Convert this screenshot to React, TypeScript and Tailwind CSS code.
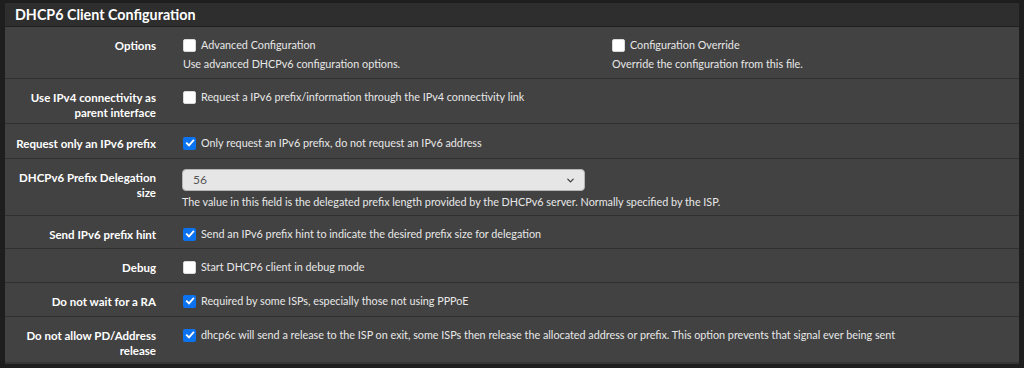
import { ChevronDown } from 'lucide-react';

type Row = {
  label: string;
  text?: string;
  checked?: boolean;
  h: string;
};

function Box({ checked }: { checked?: boolean }) {
  return checked ? (
    <span className="flex-none w-[13px] h-[13px] rounded-[2px] bg-[#0b73ef] flex items-center justify-center">
      <svg width="10" height="10" viewBox="0 0 10 10" fill="none">
        <path d="M1.8 5.2 L4 7.4 L8.3 2.6" stroke="white" strokeWidth="1.8" strokeLinecap="square" />
      </svg>
    </span>
  ) : (
    <span className="flex-none w-[13px] h-[13px] rounded-[2px] bg-white border border-[#d9d9d9]" />
  );
}

function Check({ checked, text }: { checked?: boolean; text: string }) {
  return (
    <div className="flex items-center gap-[5px] h-[16px]">
      <Box checked={checked} />
      <span className="text-[#e8e8e8]">{text}</span>
    </div>
  );
}

function Label({ children }: { children: string }) {
  return (
    <div className="w-[151px] flex-none pl-[9px] text-right font-bold text-white text-[11.5px] leading-[15px] pt-[1px]">
      {children}
    </div>
  );
}

const lower: Row[] = [
  { label: 'Send IPv6 prefix hint', text: 'Send an IPv6 prefix hint to indicate the desired prefix size for delegation', checked: true, h: 'h-[33px]' },
  { label: 'Debug', text: 'Start DHCP6 client in debug mode', h: 'h-[34px]' },
  { label: 'Do not wait for a RA', text: 'Required by some ISPs, especially those not using PPPoE', checked: true, h: 'h-[34px]' },
  { label: 'Do not allow PD/Address release', text: 'dhcp6c will send a release to the ISP on exit, some ISPs then release the allocated address or prefix. This option prevents that signal ever being sent', checked: true, h: 'h-[45px]' },
];

export default function App() {
  return (
    <div className="w-[1024px] h-[368px] bg-[#1e1e1e] pt-[3px] pl-[5px] text-[10.8px]" style={{ fontFamily: 'Lato, "Open Sans", sans-serif' }}>
      <div className="w-[1014px] bg-[#424242] border-b-[2px] border-[#363636]">
        <div className="h-[24px] bg-[#2e2e2e] border-b border-[#1f1f1f] flex items-center pl-[10px]">
          <h2 className="text-[14.3px] font-bold text-white">DHCP6 Client Configuration</h2>
        </div>

        <div className="h-[52px] flex pt-[10px] border-b border-[#303030]">
          <Label>Options</Label>
          <div className="ml-[27px] flex">
            <div className="w-[429px]">
              <Check text="Advanced Configuration" />
              <div className="mt-[3px] text-[#e8e8e8]">Use advanced DHCPv6 configuration options.</div>
            </div>
            <div>
              <Check text="Configuration Override" />
              <div className="mt-[3px] text-[#e8e8e8]">Override the configuration from this file.</div>
            </div>
          </div>
        </div>

        <div className="h-[45px] flex pt-[10px] border-b border-[#303030]">
          <Label>Use IPv4 connectivity as parent interface</Label>
          <div className="ml-[27px]">
            <Check text="Request a IPv6 prefix/information through the IPv4 connectivity link" />
          </div>
        </div>

        <div className="h-[35px] flex pt-[11px] border-b border-[#303030]">
          <Label>Request only an IPv6 prefix</Label>
          <div className="ml-[27px]">
            <Check checked text="Only request an IPv6 prefix, do not request an IPv6 address" />
          </div>
        </div>

        <div className="h-[57px] flex pt-[10px] border-b border-[#303030]">
          <Label>DHCPv6 Prefix Delegation size</Label>
          <div className="ml-[26px]">
            <div className="w-[403px] h-[22px] rounded-[4px] bg-[#e6e6e6] border border-[#b5b5b5] flex items-center justify-between pl-[10px] pr-[8px]">
              <span className="text-[#555] text-[12px]">56</span>
              <ChevronDown size={11} strokeWidth={2.5} className="text-[#333]" />
            </div>
            <div className="mt-[3px] text-[#e8e8e8]">
              The value in this field is the delegated prefix length provided by the DHCPv6 server. Normally specified by the ISP.
            </div>
          </div>
        </div>

        {lower.map((r, i) => (
          <div key={r.label} className={`${r.h} flex pt-[10px] ${i < lower.length - 1 ? 'border-b border-[#303030]' : ''}`}>
            <Label>{r.label}</Label>
            <div className="ml-[27px]">
              <Check checked={r.checked} text={r.text ?? ''} />
            </div>
          </div>
        ))}
      </div>
    </div>
  );
}
